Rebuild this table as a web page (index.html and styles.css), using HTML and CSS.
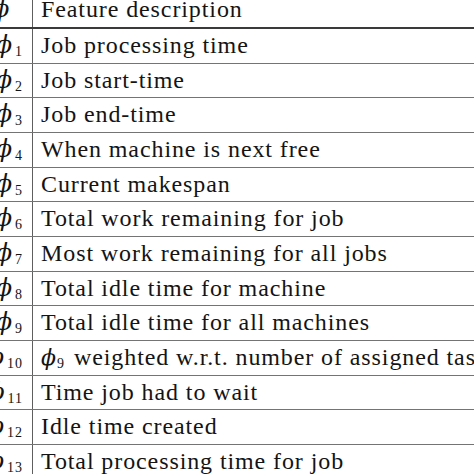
FILE: index.html
```html
<!DOCTYPE html>
<html>
<head>
<meta charset="utf-8">
<link rel="stylesheet" href="styles.css">
</head>
<body>
<div class="table">
  <div class="row head"><div class="sym"><span class="sy"><span class="phi">ϕ</span></span></div><div class="desc">Feature description</div></div>
  <div class="row"><div class="sym"><span class="sy"><span class="phi">ϕ</span><sub>1</sub></span></div><div class="desc">Job processing time</div></div>
  <div class="row"><div class="sym"><span class="sy"><span class="phi">ϕ</span><sub>2</sub></span></div><div class="desc">Job start-time</div></div>
  <div class="row"><div class="sym"><span class="sy"><span class="phi">ϕ</span><sub>3</sub></span></div><div class="desc">Job end-time</div></div>
  <div class="row"><div class="sym"><span class="sy"><span class="phi">ϕ</span><sub>4</sub></span></div><div class="desc">When machine is next free</div></div>
  <div class="row"><div class="sym"><span class="sy"><span class="phi">ϕ</span><sub>5</sub></span></div><div class="desc">Current makespan</div></div>
  <div class="row"><div class="sym"><span class="sy"><span class="phi">ϕ</span><sub>6</sub></span></div><div class="desc">Total work remaining for job</div></div>
  <div class="row"><div class="sym"><span class="sy"><span class="phi">ϕ</span><sub>7</sub></span></div><div class="desc">Most work remaining for all jobs</div></div>
  <div class="row"><div class="sym"><span class="sy"><span class="phi">ϕ</span><sub>8</sub></span></div><div class="desc">Total idle time for machine</div></div>
  <div class="row"><div class="sym"><span class="sy"><span class="phi">ϕ</span><sub>9</sub></span></div><div class="desc">Total idle time for all machines</div></div>
  <div class="row"><div class="sym"><span class="sy"><span class="phi">ϕ</span><sub>10</sub></span></div><div class="desc"><span class="phi">ϕ</span><sub class="inl">9</sub>weighted w.r.t. number of assigned tasks</div></div>
  <div class="row"><div class="sym"><span class="sy"><span class="phi">ϕ</span><sub>11</sub></span></div><div class="desc">Time job had to wait</div></div>
  <div class="row"><div class="sym"><span class="sy"><span class="phi">ϕ</span><sub>12</sub></span></div><div class="desc">Idle time created</div></div>
  <div class="row"><div class="sym"><span class="sy"><span class="phi">ϕ</span><sub>13</sub></span></div><div class="desc">Total processing time for job</div></div>
</div>
</body>
</html>
```
FILE: styles.css
```css
html, body {
  margin: 0;
  padding: 0;
  background: #fff;
}
body {
  width: 474px;
  height: 474px;
  overflow: hidden;
  font-family: "Liberation Serif", "Times New Roman", serif;
  font-size: 24px;
  letter-spacing: 0.9px;
  color: #141414;
}
.table {
  display: flex;
  flex-direction: column;
}
.row {
  display: grid;
  grid-template-columns: 33px 1fr;
  height: 33.67px;
  border-bottom: 1px solid #747474;
  white-space: nowrap;
  line-height: 24px;
}
.row.head {
  height: 27px;
  border-bottom: 2px solid #3a3a3a;
  line-height: 18px;
}
.sym {
  border-right: 1px solid #5e5e5e;
  overflow: hidden;
  padding-top: 4px;
  padding-right: 9px;
  letter-spacing: 0;
  display: flex;
  justify-content: flex-end;
  align-items: flex-start;
}
.head .sym {
  justify-content: flex-start;
  padding-right: 0;
}
.head .sym .phi {
  margin-left: -7px;
}
.head .sym,
.head .desc {
  padding-top: 0;
}
.sy {
  flex: none;
  white-space: nowrap;
}
.phi {
  font-family: "DejaVu Serif", serif;
  font-style: italic;
  font-size: 22px;
  letter-spacing: 0;
}
.sym .phi {
  font-size: 24px;
  margin-right: 3px;
}
sub {
  font-size: 14px;
  letter-spacing: 1px;
  vertical-align: -3px;
  line-height: 0;
}
sub.inl {
  margin-left: 1px;
  margin-right: 9px;
}
.desc {
  padding-left: 8px;
  padding-top: 4px;
  overflow: hidden;
}
```
